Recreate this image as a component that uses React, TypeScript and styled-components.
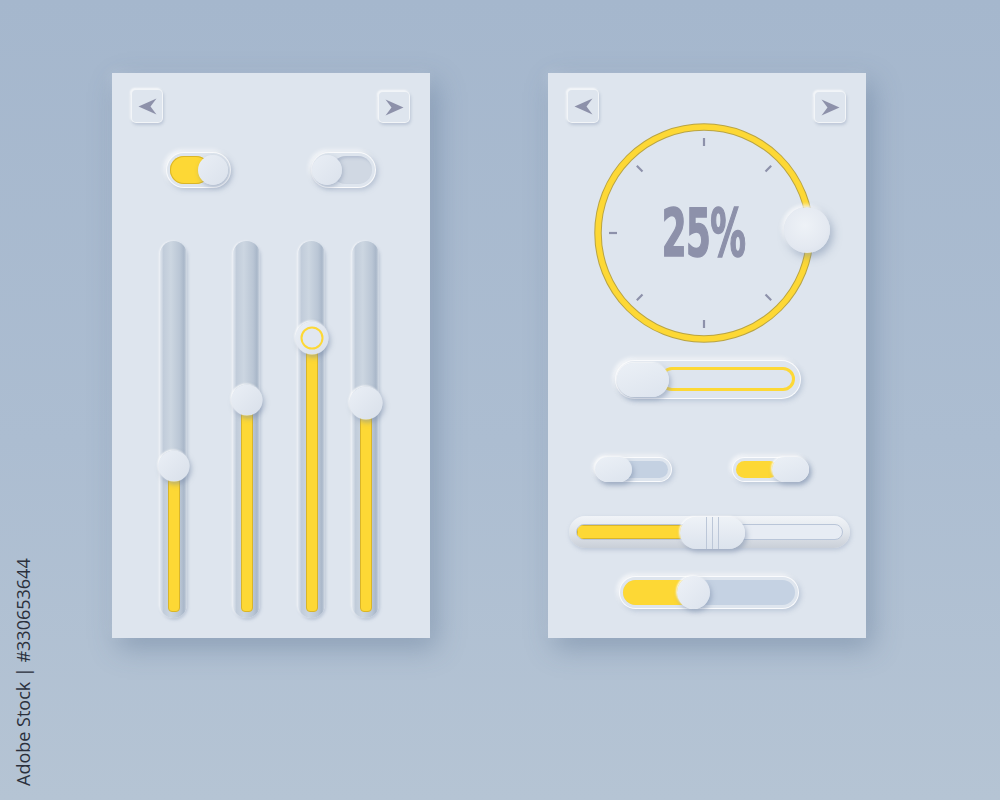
import React from "react";
import styled, { createGlobalStyle } from "styled-components";

const yellow = "#fdd835";
const yellowEdge = "#d9b52a";
const surface = "#dee5ee";
const ink = "#8d91aa";

const GlobalStyle = createGlobalStyle`
  html, body {
    margin: 0;
    padding: 0;
  }
  body {
    width: 1000px;
    height: 800px;
    overflow: hidden;
    font-family: "Open Sans", "DejaVu Sans", sans-serif;
  }
`;

const Page = styled.div`
  position: relative;
  width: 1000px;
  height: 800px;
  box-sizing: border-box;
  display: flex;
  align-items: flex-start;
  gap: 118px;
  padding: 73px 0 0 112px;
  background: linear-gradient(180deg, #a5b7cd 0%, #acbdd1 55%, #b5c4d4 100%);
`;

const Panel = styled.div`
  width: 318px;
  height: 565px;
  box-sizing: border-box;
  display: flex;
  flex-direction: column;
  align-items: flex-start;
  padding: 16px 20px 0 19px;
  background: ${surface};
  box-shadow: 6px 10px 26px rgba(70, 95, 130, 0.35), -2px -2px 10px rgba(255, 255, 255, 0.15);
`;

const NavRow = styled.div`
  align-self: stretch;
  display: flex;
  justify-content: space-between;
  align-items: flex-start;
`;

const NavButton = styled.button<{ $low?: boolean }>`
  width: 32px;
  height: ${({ $low }) => ($low ? 32 : 34)}px;
  margin-top: ${({ $low }) => ($low ? 2 : 0)}px;
  padding: 0;
  display: flex;
  align-items: center;
  justify-content: center;
  border: 1px solid rgba(255, 255, 255, 0.6);
  border-radius: 5px;
  background: ${surface};
  box-shadow: 1px 2px 3px rgba(140, 156, 182, 0.4), -1px -1px 2px rgba(255, 255, 255, 0.8);
  cursor: pointer;
`;

const Arrow = ({ dir }: { dir: "left" | "right" }) => (
  <svg width="19" height="17" viewBox="0 0 19 17">
    <path
      d={dir === "left" ? "M0.5 8.5 L18.5 0.5 L12.5 8.5 L18.5 16.5 Z" : "M18.5 8.5 L0.5 0.5 L6.5 8.5 L0.5 16.5 Z"}
      fill={ink}
    />
  </svg>
);

/* big on/off toggles */
const ToggleRow = styled.div`
  display: flex;
  gap: 80px;
  margin: 29px 0 0 35px;
`;

const Toggle = styled.div`
  position: relative;
  width: 65px;
  height: 36px;
  box-sizing: border-box;
  border-radius: 18px;
  background: ${surface};
  border: 1px solid rgba(255, 255, 255, 0.8);
  box-shadow: 2px 2px 5px rgba(145, 162, 188, 0.5), -2px -2px 4px rgba(255, 255, 255, 0.8);
`;

const ToggleTrack = styled.div<{ $on: boolean }>`
  position: absolute;
  top: 3px;
  bottom: 3px;
  left: ${({ $on }) => ($on ? 3 : 20)}px;
  right: ${({ $on }) => ($on ? 20 : 3)}px;
  border-radius: 15px;
  background: ${({ $on }) => ($on ? yellow : "#d0d8e3")};
  box-shadow: ${({ $on }) =>
    $on ? `inset 0 0 0 1px ${yellowEdge}` : "inset 2px 2px 3px rgba(150, 165, 190, 0.45)"};
`;

const ToggleKnob = styled.div<{ $on: boolean }>`
  position: absolute;
  top: 2px;
  left: ${({ $on }) => ($on ? 31 : 0)}px;
  width: 30px;
  height: 30px;
  border-radius: 50%;
  background: linear-gradient(135deg, #e9eef5, #dbe2ec);
  box-shadow: 1px 2px 4px rgba(125, 142, 170, 0.5);
`;

/* vertical faders */
const FaderRow = styled.div`
  display: flex;
  align-items: flex-start;
  margin: 53px 0 0 29px;
`;

const Fader = styled.div<{ $gap: number }>`
  position: relative;
  width: 27px;
  height: 377px;
  margin-left: ${({ $gap }) => $gap}px;
  border-radius: 14px;
  background: linear-gradient(
    90deg,
    #e2e8f0 0%,
    #c1ccda 13%,
    #ccd6e1 40%,
    #bac6d5 74%,
    #a9b7c9 89%,
    #d3dbe5 100%
  );
  box-shadow: 1px 2px 3px rgba(140, 156, 182, 0.4), -1px 0 2px rgba(255, 255, 255, 0.8);
`;

const FaderFill = styled.div<{ $top: number }>`
  position: absolute;
  left: 8px;
  width: 12px;
  bottom: 6px;
  top: ${({ $top }) => $top}px;
  box-sizing: border-box;
  border: 1px solid ${yellowEdge};
  border-radius: 2px 2px 4px 4px;
  background: ${yellow};
`;

const FaderKnob = styled.div<{ $top: number; $size: number }>`
  position: absolute;
  left: 50%;
  top: ${({ $top }) => $top}px;
  width: ${({ $size }) => $size}px;
  height: ${({ $size }) => $size}px;
  transform: translate(-50%, -50%);
  border-radius: 50%;
  display: flex;
  align-items: center;
  justify-content: center;
  background: linear-gradient(135deg, #eaeff6, #d9e0ea);
  box-shadow: 2px 3px 5px rgba(120, 138, 168, 0.5), -1px -1px 2px rgba(255, 255, 255, 0.9);
`;

const RingMark = styled.div`
  width: 23px;
  height: 23px;
  box-sizing: border-box;
  border-radius: 50%;
  border: 2.5px solid ${yellow};
  background: #e1e7f0;
`;

/* dial */
const Dial = styled.div`
  position: relative;
  width: 222px;
  height: 222px;
  margin: -1px 0 0 26px;
  display: grid;
  place-items: center;

  & > * {
    grid-area: 1 / 1;
  }
`;

const Percent = styled.div`
  font-family: "DejaVu Sans Condensed", "DejaVu Sans", sans-serif;
  font-weight: 700;
  font-size: 66px;
  line-height: 1;
  color: ${ink};
  -webkit-text-stroke: 1.6px ${ink};
  letter-spacing: -1px;
  transform: scaleX(0.6);
  margin-top: 2px;
`;

const DialKnob = styled.div`
  position: absolute;
  left: 191px;
  top: 85px;
  width: 46px;
  height: 46px;
  border-radius: 50%;
  background: radial-gradient(circle at 45% 40%, #eef2f7 0%, #e4e9f1 60%, #d7dee9 100%);
  box-shadow: 3px 4px 8px rgba(115, 135, 165, 0.5), -2px -2px 4px rgba(255, 255, 255, 0.9);
`;

const ticks = [0, 45, 135, 180, 225, 270, 315];

const DialFace = () => (
  <svg width="222" height="222" viewBox="0 0 222 222">
    <circle cx="111" cy="111" r="106" fill="none" stroke="#b9a443" strokeWidth="7.5" />
    <circle cx="111" cy="111" r="106" fill="none" stroke={yellow} strokeWidth="5.5" />
    {ticks.map((a) => {
      const r = (a * Math.PI) / 180;
      const s = Math.sin(r);
      const c = Math.cos(r);
      return (
        <line
          key={a}
          x1={111 + 87 * s}
          y1={111 - 87 * c}
          x2={111 + 95 * s}
          y2={111 - 95 * c}
          stroke={ink}
          strokeWidth="2.2"
        />
      );
    })}
  </svg>
);

/* horizontal controls */
const Pill = styled.div<{ $w: number; $h: number; $top: number; $left: number }>`
  position: relative;
  width: ${({ $w }) => $w}px;
  height: ${({ $h }) => $h}px;
  margin: ${({ $top, $left }) => `${$top}px 0 0 ${$left}px`};
  box-sizing: border-box;
  border-radius: ${({ $h }) => $h / 2}px;
  background: ${surface};
  border: 1px solid rgba(255, 255, 255, 0.85);
  box-shadow: 2px 2px 5px rgba(145, 162, 188, 0.45), -2px -2px 4px rgba(255, 255, 255, 0.8);
`;

const OutlineTrack = styled.div`
  position: absolute;
  left: 44px;
  top: 6px;
  width: 135px;
  height: 24px;
  box-sizing: border-box;
  border: 3px solid ${yellow};
  border-radius: 12px;
`;

const PillKnob = styled.div<{ $left: number; $top: number; $w: number; $h: number }>`
  position: absolute;
  left: ${({ $left }) => $left}px;
  top: ${({ $top }) => $top}px;
  width: ${({ $w }) => $w}px;
  height: ${({ $h }) => $h}px;
  border-radius: ${({ $h }) => $h / 2}px;
  background: linear-gradient(160deg, #ebf0f6, #dde4ee);
  box-shadow: 2px 3px 5px rgba(120, 138, 168, 0.5), -1px -1px 2px rgba(255, 255, 255, 0.9);
`;

const SmallRow = styled.div`
  display: flex;
  gap: 60px;
  margin: 58px 0 0 28px;
`;

const Inset = styled.div<{ $inset: number; $color: string; $right?: number }>`
  position: absolute;
  top: ${({ $inset }) => $inset}px;
  bottom: ${({ $inset }) => $inset}px;
  left: ${({ $inset }) => $inset}px;
  right: ${({ $inset, $right }) => $right ?? $inset}px;
  border-radius: 14px;
  background: ${({ $color }) => $color};
`;

const WideSlider = styled.div`
  position: relative;
  width: 281px;
  height: 32px;
  margin: 34px 0 0 2px;
  border-radius: 16px;
  background: linear-gradient(180deg, #f1f4f8 0%, #e1e6ec 50%, #c9cfd8 100%);
  box-shadow: 1px 2px 4px rgba(140, 156, 182, 0.4);
`;

const WideTrack = styled.div`
  position: absolute;
  left: 7px;
  right: 7px;
  top: 8px;
  height: 16px;
  box-sizing: border-box;
  border: 1px solid #b9c5d8;
  border-radius: 8px;
  background: #e7ecf4;
  overflow: hidden;
`;

const WideFill = styled.div`
  width: 116px;
  height: 100%;
  background: ${yellow};
  box-shadow: inset 0 0 0 1px ${yellowEdge};
`;

const Grip = styled.div`
  position: absolute;
  left: 111px;
  top: 1px;
  width: 65px;
  height: 32px;
  border-radius: 16px;
  display: flex;
  justify-content: center;
  gap: 5px;
  background: linear-gradient(180deg, #eef2f7, #dce3ed);
  box-shadow: 2px 3px 5px rgba(120, 138, 168, 0.5), -1px -1px 2px rgba(255, 255, 255, 0.9);
`;

const Groove = styled.span`
  width: 1px;
  height: 100%;
  background: #bcc7d8;
`;

const RoundKnob = styled.div`
  position: absolute;
  left: 57px;
  top: -1px;
  width: 33px;
  height: 33px;
  border-radius: 50%;
  background: linear-gradient(135deg, #edf1f7, #dce3ed);
  box-shadow: 2px 3px 5px rgba(120, 138, 168, 0.5), -1px -1px 2px rgba(255, 255, 255, 0.9);
`;

const StampLine = styled.div`
  position: absolute;
  left: 12px;
  top: 786px;
  transform-origin: 0 0;
  transform: rotate(-90deg);
  white-space: nowrap;
  font-family: "Open Sans", "DejaVu Sans", sans-serif;
  font-size: 18px;
  line-height: 22px;
  color: #2b303c;
`;

const SmallToggle = ({ on }: { on: boolean }) => (
  <Pill $w={77} $h={25} $top={0} $left={0}>
    {on ? (
      <Inset $inset={3} $right={30} $color={yellow} />
    ) : (
      <Inset $inset={3} $color="#c4d1e2" />
    )}
    <PillKnob $left={on ? 39 : -1} $top={-1} $w={37} $h={25} />
  </Pill>
);

export default function App() {
  return (
    <Page>
      <GlobalStyle />
      <Panel>
        <NavRow>
          <NavButton aria-label="previous">
            <Arrow dir="left" />
          </NavButton>
          <NavButton $low aria-label="next">
            <Arrow dir="right" />
          </NavButton>
        </NavRow>
        <ToggleRow>
          <Toggle>
            <ToggleTrack $on />
            <ToggleKnob $on />
          </Toggle>
          <Toggle>
            <ToggleTrack $on={false} />
            <ToggleKnob $on={false} />
          </Toggle>
        </ToggleRow>
        <FaderRow>
          <Fader $gap={0}>
            <FaderFill $top={225} />
            <FaderKnob $top={225} $size={31} />
          </Fader>
          <Fader $gap={46}>
            <FaderFill $top={159} />
            <FaderKnob $top={159} $size={31} />
          </Fader>
          <Fader $gap={38}>
            <FaderFill $top={97} />
            <FaderKnob $top={97} $size={33}>
              <RingMark />
            </FaderKnob>
          </Fader>
          <Fader $gap={27}>
            <FaderFill $top={162} />
            <FaderKnob $top={162} $size={33} />
          </Fader>
        </FaderRow>
      </Panel>

      <Panel>
        <NavRow>
          <NavButton aria-label="previous">
            <Arrow dir="left" />
          </NavButton>
          <NavButton $low aria-label="next">
            <Arrow dir="right" />
          </NavButton>
        </NavRow>
        <Dial>
          <DialFace />
          <Percent>25%</Percent>
          <DialKnob />
        </Dial>
        <Pill $w={186} $h={39} $top={16} $left={48}>
          <OutlineTrack />
          <PillKnob $left={1} $top={2} $w={52} $h={34} />
        </Pill>
        <SmallRow>
          <SmallToggle on={false} />
          <SmallToggle on />
        </SmallRow>
        <WideSlider>
          <WideTrack>
            <WideFill />
          </WideTrack>
          <Grip>
            <Groove />
            <Groove />
            <Groove />
          </Grip>
        </WideSlider>
        <Pill $w={180} $h={33} $top={28} $left={52}>
          <Inset $inset={3} $color="#c5d2e3" />
          <Inset $inset={3} $right={104} $color={yellow} />
          <RoundKnob />
        </Pill>
      </Panel>

      <StampLine>Adobe Stock | #330653644</StampLine>
    </Page>
  );
}
